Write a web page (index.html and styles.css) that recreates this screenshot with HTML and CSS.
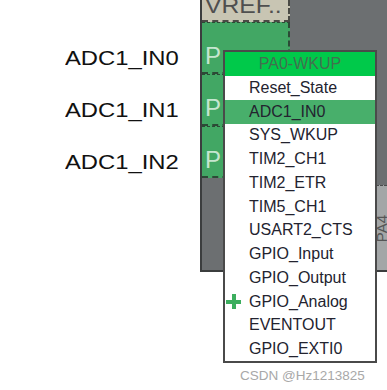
FILE: index.html
```html
<!DOCTYPE html>
<html>
<head>
    <meta charset="UTF-8">
    <meta name="viewport" content="width=device-width, initial-scale=1.0">
    <title>Pin Mode</title>
    <link rel="stylesheet" href="styles.css">
</head>
<body>
<div class="stage">
    <!-- Signal labels beside the pins -->
    <div class="labels">
        <div class="label"><span>ADC1_IN0</span></div>
        <div class="label"><span>ADC1_IN1</span></div>
        <div class="label"><span>ADC1_IN2</span></div>
    </div>

    <!-- Chip body -->
    <div class="chip">
        <div class="pins">
            <div class="pin vref"><span>VREF..</span></div>
            <div class="pin io">P</div>
            <div class="pin io">P</div>
            <div class="pin io">P</div>
        </div>
        <div class="side">
            <div class="pin pa4"><span>PA4</span></div>
        </div>
    </div>
</div>

<!-- Pin function popup -->
<div class="menu">
    <div class="menu-head">PA0-WKUP</div>
    <div class="item"><span class="mark"></span>Reset_State</div>
    <div class="item selected"><span class="mark"></span>ADC1_IN0</div>
    <div class="item"><span class="mark"></span>SYS_WKUP</div>
    <div class="item"><span class="mark"></span>TIM2_CH1</div>
    <div class="item"><span class="mark"></span>TIM2_ETR</div>
    <div class="item"><span class="mark"></span>TIM5_CH1</div>
    <div class="item"><span class="mark"></span>USART2_CTS</div>
    <div class="item"><span class="mark"></span>GPIO_Input</div>
    <div class="item"><span class="mark"></span>GPIO_Output</div>
    <div class="item"><span class="mark"><span class="plus"></span></span>GPIO_Analog</div>
    <div class="item"><span class="mark"></span>EVENTOUT</div>
    <div class="item"><span class="mark"></span>GPIO_EXTI0</div>
</div>

<div class="watermark">CSDN @Hz1213825</div>
</body>
</html>
```

FILE: styles.css
```css
html, body {
    margin: 0;
    background: #fff;
}

body {
    width: 387px;
    height: 390px;
    position: relative;
    overflow: hidden;
    font-family: "Liberation Sans", Arial, sans-serif;
}

.stage {
    display: flex;
    height: 272px;
}

/* Labels to the left of the chip */
.labels {
    width: 200px;
    padding-top: 32px;
    display: flex;
    flex-direction: column;
}

.label {
    height: 52px;
    display: flex;
    align-items: center;
    padding-left: 65px;
    font-size: 20px;
    color: #111;
}

.label span {
    display: inline-block;
    transform: scaleX(1.19);
    transform-origin: left center;
}

/* Chip body */
.chip {
    flex: 1;
    display: flex;
    background: #6c6f71;
    border-left: 2px solid #3b3d3e;
    border-bottom: 2px solid #3b3d3e;
}

.pins {
    width: 88px;
    display: flex;
    flex-direction: column;
}

.pin {
    box-sizing: border-box;
    overflow: hidden;
}

.vref {
    height: 22px;
    background: #c8c5b3;
    border-bottom: 2px dashed #4a4a45;
    border-right: 2px dashed #4a4a45;
    color: #4f4f4f;
    font-size: 22px;
    padding-left: 3px;
}

.vref span {
    display: block;
    line-height: 20px;
    margin-top: -4px;
    transform: scaleX(1.12);
    transform-origin: left center;
}

.io {
    height: 52px;
    background: #42a764;
    border-top: 1px dashed #2c4a36;
    border-bottom: 2px dashed #2c4a36;
    border-right: 2px dashed #2c4a36;
    color: #c6e6d0;
    font-size: 24px;
    padding-left: 3px;
    padding-top: 16px;
    display: flex;
    align-items: center;
}

.side {
    margin-left: auto;
    width: 11px;
    padding-top: 185px;
    display: flex;
    flex-direction: column;
}

.pa4 {
    flex: 1;
    background: #a3a6a7;
    border-left: 1px solid #4a4c4d;
    border-top: 1px dashed #4a4c4d;
    color: #555;
    font-size: 15px;
    display: flex;
    align-items: center;
    justify-content: center;
}

.pa4 span {
    display: inline-block;
    transform: rotate(-90deg);
    white-space: nowrap;
}

/* Popup menu over the chip */
.menu {
    position: absolute;
    left: 223px;
    top: 50px;
    width: 154px;
    box-sizing: border-box;
    border: 2px solid #4a4a4a;
    background: #fff;
    font-size: 16px;
}

.menu-head {
    height: 24px;
    line-height: 24px;
    background: #00c94a;
    color: #41704f;
    text-align: center;
}

.item {
    height: 23.75px;
    display: flex;
    align-items: center;
    color: #23232f;
}

.item.selected {
    background: #48af6b;
}

.mark {
    width: 24px;
    height: 100%;
    display: flex;
    align-items: center;
}

.plus {
    width: 15px;
    height: 15px;
    margin-left: 1px;
    background:
        linear-gradient(#3cae5e, #3cae5e) center / 15px 4px no-repeat,
        linear-gradient(#3cae5e, #3cae5e) center / 4px 15px no-repeat;
}

.watermark {
    position: absolute;
    left: 240px;
    top: 368px;
    font-size: 13.5px;
    color: #a8a8a8;
}
```
